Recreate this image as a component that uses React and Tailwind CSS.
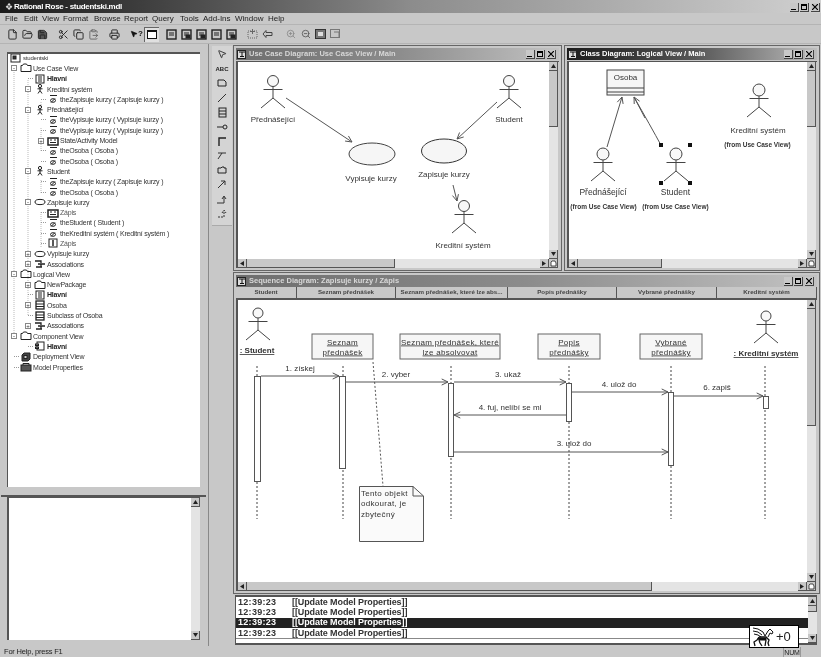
import {
  File, FolderOpen, Save, Scissors, Copy, ClipboardPaste, Printer, MousePointer2, ZoomIn, ZoomOut,
} from "lucide-react";

const menu = [
  ["File", "w-[19px]"], ["Edit", "w-[18px]"], ["View", "w-[21px]"], ["Format", "w-[31px]"], ["Browse", "w-[30px]"],
  ["Report", "w-[28px]"], ["Query", "w-[28px]"], ["Tools", "w-[23px]"], ["Add-Ins", "w-[32px]"], ["Window", "w-[33px]"], ["Help", "w-[20px]"],
];

const pads = ["-ml-[7px]", "pl-[3px]", "pl-[17px]", "pl-[30px]"];

const tree = [
  { l: 0, t: "studentski", i: "model", small: true },
  { l: 1, t: "Use Case View", i: "folder", e: "-" },
  { l: 2, t: "Hlavní", i: "diagram", b: true },
  { l: 2, t: "Kreditní systém", i: "actor", e: "-" },
  { l: 3, t: "theZapisuje kurzy ( Zapisuje kurzy )", i: "msg" },
  { l: 2, t: "Přednášející", i: "actor", e: "-" },
  { l: 3, t: "theVypisuje kurzy ( Vypisuje kurzy )", i: "msg" },
  { l: 3, t: "theVypisuje kurzy ( Vypisuje kurzy )", i: "msg" },
  { l: 3, t: "State/Activity Model", i: "state", e: "+" },
  { l: 3, t: "theOsoba ( Osoba )", i: "msg" },
  { l: 3, t: "theOsoba ( Osoba )", i: "msg" },
  { l: 2, t: "Student", i: "actor", e: "-" },
  { l: 3, t: "theZapisuje kurzy ( Zapisuje kurzy )", i: "msg" },
  { l: 3, t: "theOsoba ( Osoba )", i: "msg" },
  { l: 2, t: "Zapisuje kurzy", i: "usecase", e: "-" },
  { l: 3, t: "Zápis", i: "state", dim: true },
  { l: 3, t: "theStudent ( Student )", i: "msg" },
  { l: 3, t: "theKreditní systém ( Kreditní systém )", i: "msg" },
  { l: 3, t: "Zápis", i: "seq", dim: true },
  { l: 2, t: "Vypisuje kurzy", i: "usecase", e: "+" },
  { l: 2, t: "Associations", i: "assoc", e: "+" },
  { l: 1, t: "Logical View", i: "folder", e: "-" },
  { l: 2, t: "NewPackage", i: "folder", e: "+" },
  { l: 2, t: "Hlavní", i: "diagram", b: true },
  { l: 2, t: "Osoba", i: "class", e: "+" },
  { l: 2, t: "Subclass of Osoba", i: "class" },
  { l: 2, t: "Associations", i: "assoc", e: "+" },
  { l: 1, t: "Component View", i: "folder", e: "-" },
  { l: 2, t: "Hlavní", i: "comp", b: true },
  { l: 1, t: "Deployment View", i: "deploy" },
  { l: 1, t: "Model Properties", i: "props" },
];

const TreeIcon = ({ type }) => {
  const s = { fill: "none", stroke: "#222", strokeWidth: 1 };
  return (
    <svg width="12" height="10" viewBox="0 0 12 10" className="block">
      {type === "model" && <g {...s}><rect x="1" y="1" width="9" height="8" /><rect x="3" y="3" width="3" height="3" fill="#333" /></g>}
      {type === "folder" && <path {...s} d="M1 8.5V2.5h1.5l1-1.5h3l1 1.5H11v6z" />}
      {type === "diagram" && <g {...s}><rect x="2" y="1" width="8" height="8" /><path d="M4 3h4M4 5h4M4 7h4" /></g>}
      {type === "actor" && <g {...s}><circle cx="6" cy="2" r="1.6" /><path d="M6 3.6V6.5M3.5 4.8h5M6 6.5L4 9.5M6 6.5l2 3" /></g>}
      {type === "msg" && <g {...s}><path d="M3 1.5h7" /><path d="M8 4.5L4 8.5" /><ellipse cx="6" cy="6.5" rx="2.5" ry="1.8" /></g>}
      {type === "state" && <g {...s}><rect x="1" y="2" width="10" height="7" strokeWidth="1.5" /><path d="M3 4h2M7 4h2M3 6.5h6" /></g>}
      {type === "usecase" && <ellipse {...s} cx="6" cy="5" rx="5" ry="2.6" />}
      {type === "seq" && <g {...s}><rect x="2" y="1" width="8" height="8" /><path d="M6 2v6" strokeWidth="1.5" /></g>}
      {type === "assoc" && <path {...s} strokeWidth="1.3" d="M1 2h6v2M4 5h7M7 5v3M2 8h6" />}
      {type === "class" && <g {...s}><rect x="2" y="1" width="8" height="8" strokeWidth="1.3" /><path d="M2 4h8M2 6.5h8" /></g>}
      {type === "comp" && <g {...s}><rect x="3" y="1" width="7" height="8" /><rect x="1.5" y="3" width="3" height="1.5" /><rect x="1.5" y="6" width="3" height="1.5" /></g>}
      {type === "deploy" && <g {...s}><path d="M2 3l2-2h6v6l-2 2H2z" fill="#444" /><rect x="4" y="3.5" width="3" height="3" fill="#ccc" /></g>}
      {type === "props" && <g {...s}><rect x="1" y="3" width="10" height="6" fill="#555" /><path d="M3 3V1.5h6V3" /></g>}
    </svg>
  );
};

const TreeRow = ({ row }) => (
  <div className={`flex items-center h-[10.3px] ${pads[row.l]}`}>
    <span className="w-[8px] h-full flex items-center shrink-0">
      {row.e ? (
        <span className="w-[6px] h-[6px] border border-[#888] bg-white flex items-center justify-center text-[6px] leading-none text-[#333]">
          {row.e === "+" ? "+" : "-"}
        </span>
      ) : (
        row.l > 0 && <span className="w-full border-b border-dotted border-[#999] ml-[3px]" />
      )}
    </span>
    <span className="w-[14px] flex justify-center shrink-0"><TreeIcon type={row.i} /></span>
    <span
      className={`whitespace-nowrap leading-none tracking-[-0.2px] ${row.small ? "text-[6px]" : "text-[7px]"} ${row.b ? "font-bold text-[#222]" : "text-[#333]"} ${row.dim ? "text-[#555]" : ""}`}
    >
      {row.t}
    </span>
  </div>
);

const UpArrow = () => <svg width="5" height="4" viewBox="0 0 5 4"><path d="M2.5 0L5 4H0z" fill="#222" /></svg>;
const DownArrow = () => <svg width="5" height="4" viewBox="0 0 5 4"><path d="M0 0h5L2.5 4z" fill="#222" /></svg>;
const LeftArrow = () => <svg width="4" height="5" viewBox="0 0 4 5"><path d="M4 0v5L0 2.5z" fill="#222" /></svg>;
const RightArrow = () => <svg width="4" height="5" viewBox="0 0 4 5"><path d="M0 0v5l4-2.5z" fill="#222" /></svg>;

const Btn = ({ children, className = "" }) => (
  <span className={`flex items-center justify-center bg-[#c8c8c8] border-r border-b border-[#555] shrink-0 ${className}`}>{children}</span>
);

const VScroll = ({ thumb }) => (
  <div className="w-[9px] flex flex-col bg-[#e4e4e4] shrink-0">
    <Btn className="h-[9px]"><UpArrow /></Btn>
    {thumb && <div className={`bg-[#c8c8c8] border-b border-r border-[#555] shrink-0 ${thumb}`} />}
    <div className="flex-1" />
    <Btn className="h-[9px]"><DownArrow /></Btn>
  </div>
);

const HScroll = ({ thumb }) => (
  <div className="h-[9px] flex bg-[#e4e4e4] shrink-0">
    <Btn className="w-[9px]"><LeftArrow /></Btn>
    <div className={`bg-[#c8c8c8] border-b border-r border-[#555] shrink-0 ${thumb}`} />
    <div className="flex-1" />
    <Btn className="w-[9px]"><RightArrow /></Btn>
    <Btn className="w-[9px]">
      <svg width="8" height="8" viewBox="0 0 8 8"><path d="M2 7V3l1-1 3 0 1 2v3z" fill="#fff" stroke="#222" strokeWidth="0.8" /></svg>
    </Btn>
  </div>
);

const WinButtons = () => (
  <div className="flex gap-[1px] shrink-0">
    <span className="w-[9px] h-[9px] bg-[#c8c8c8] border-r border-b border-[#444] flex items-end pl-[1px] pb-[1px]"><span className="w-[5px] h-[1px] bg-black" /></span>
    <span className="w-[9px] h-[9px] bg-[#c8c8c8] border-r border-b border-[#444] flex items-center justify-center"><span className="w-[6px] h-[6px] border border-black border-t-2" /></span>
    <span className="w-[9px] h-[9px] ml-[1px] bg-[#c8c8c8] border-r border-b border-[#444] flex items-center justify-center">
      <svg width="6" height="6" viewBox="0 0 6 6"><path d="M0 0l6 6M6 0L0 6" stroke="#000" strokeWidth="1.2" /></svg>
    </span>
  </div>
);

const Window = ({ title, dark, className, tabs, thumb, vThumb, vb, cw, ch, children }) => (
  <div className={`flex flex-col bg-[#c8c8c8] border border-[#666] p-[2px] ${className}`}>
    <div
      className={`h-[12px] flex items-center pl-[1px] pr-[3px] shrink-0 bg-gradient-to-r ${dark ? "from-[#1c1c1c] via-[#555] to-[#bdbdbd] text-white" : "from-[#6e6e6e] via-[#8c8c8c] to-[#c2c2c2] text-[#d8d8d8]"}`}
    >
      <span className="w-[9px] h-[9px] bg-[#ddd] border border-[#222] mr-[3px] shrink-0 flex items-center justify-center">
        <svg width="6" height="6" viewBox="0 0 6 6" fill="none" stroke="#111"><path d="M0 1h6M3 1v5M1 5.5h4" /></svg>
      </span>
      <span className="flex-1 text-[7.5px] font-bold whitespace-nowrap leading-none">{title}</span>
      <WinButtons />
    </div>
    {tabs ? (
      <div className="flex h-[12px] shrink-0">
        {tabs.map(([t, w]) => (
          <span key={t} className={`flex items-center justify-center border-r border-b border-[#555] text-[6.2px] font-bold text-[#444] whitespace-nowrap leading-none ${w}`}>{t}</span>
        ))}
      </div>
    ) : (
      <div className="h-[1px] shrink-0" />
    )}
    <div className="flex-1 min-h-0 flex flex-col border-t-1 border-l-2 border-[#555] pr-[1px]">
      <div className="flex-1 min-h-0 flex">
        <div className="flex-1 min-w-0 bg-white overflow-hidden">
          <svg width={cw} height={ch} viewBox={vb} className="block">{children}</svg>
        </div>
        <VScroll thumb={vThumb} />
      </div>
      <HScroll thumb={thumb} />
    </div>
  </div>
);

const Actor = ({ x, y, r = 5.5 }) => (
  <g fill="none" stroke="#444" strokeWidth="1">
    <circle cx={x} cy={y} r={r} fill="#f8f8f8" />
    <path d={`M${x} ${y + r}V${y + 17}M${x - 9.5} ${y + 8.5}H${x + 9.5}M${x} ${y + 17}L${x - 12} ${y + 27}M${x} ${y + 17}L${x + 12} ${y + 27}`} />
  </g>
);

const T = ({ x, y, s = 8, b, u, a = "middle", c = "#333", ls, children }) => (
  <text x={x} y={y} fontSize={s} textAnchor={a} fill={c} fontWeight={b ? "bold" : "normal"} textDecoration={u ? "underline" : "none"} letterSpacing={ls}>
    {children}
  </text>
);

const Arrow = ({ x1, y1, x2, y2 }) => {
  const ang = Math.atan2(y2 - y1, x2 - x1);
  const p = (d) => `${x2 - 7 * Math.cos(ang + d)} ${y2 - 7 * Math.sin(ang + d)}`;
  return (
    <g fill="none" stroke="#555" strokeWidth="1">
      <path d={`M${x1} ${y1}L${x2} ${y2}`} />
      <path d={`M${p(0.45)}L${x2} ${y2}L${p(-0.45)}`} />
    </g>
  );
};

const Dash = ({ x, y1, y2 }) => <path d={`M${x} ${y1}V${y2}`} stroke="#444" strokeWidth="1" strokeDasharray="2 2" />;
const Act = ({ x, y, w, h }) => <rect x={x} y={y} width={w} height={h} fill="#fff" stroke="#555" strokeWidth="1" />;
const Obj = ({ x, w, l1, l2 }) => (
  <g>
    <rect x={x} y="335" width={w} height="25" fill="#f6f6f6" stroke="#666" strokeWidth="1" />
    <T x={x + w / 2} y="345.5" u ls="0.3">{l1}</T>
    <T x={x + w / 2} y="355.5" u ls="0.3">{l2}</T>
  </g>
);

const seqTabs = [
  ["Student", "w-[61px]"], ["Seznam přednášek", "w-[99px]"], ["Seznam přednášek, které lze abs...", "w-[112px]"],
  ["Popis přednášky", "w-[109px]"], ["Vybrané přednášky", "w-[100px]"], ["Kreditní systém", "w-[100px]"],
];

const Doc = ({ dark }) => (
  <svg width="11" height="11" viewBox="0 0 11 11" fill="none" stroke="#222">
    <rect x="1" y="1" width="9" height="9" strokeWidth="1.4" />
    <path d="M3 4h5M3 6h5" />
    {dark && <rect x="5" y="6" width="4" height="3" fill="#222" />}
  </svg>
);

const Slot = ({ children, pressed }) => (
  <span className={`w-[15px] h-[15px] flex items-center justify-center shrink-0 ${pressed ? "bg-[#e0e0e0] border-l border-t border-[#666]" : ""}`}>{children}</span>
);
const Sep = ({ w }) => <span className={`shrink-0 ${w}`} />;

const toolIcon = { size: 11, strokeWidth: 2, color: "#222" };

const tools = [
  <MousePointer2 size={10} color="#222" />,
  <span className="text-[6px] font-bold text-[#222] leading-none">ABC</span>,
  <svg width="10" height="8" viewBox="0 0 10 8" fill="none" stroke="#222"><path d="M1 1h6l2 2v4H1z" /></svg>,
  <svg width="10" height="10" viewBox="0 0 10 10" stroke="#333"><path d="M1 9L9 1" /></svg>,
  <svg width="9" height="11" viewBox="0 0 9 11" fill="none" stroke="#222"><rect x="1" y="1" width="7" height="9" /><path d="M1 4h7M1 7h7" /></svg>,
  <svg width="11" height="6" viewBox="0 0 11 6" fill="none" stroke="#222"><path d="M0 3h6" /><circle cx="8" cy="3" r="2" /></svg>,
  <svg width="9" height="9" viewBox="0 0 9 9" fill="none" stroke="#222" strokeWidth="1.4"><path d="M1 9V1h7" /></svg>,
  <svg width="10" height="8" viewBox="0 0 10 8" fill="none" stroke="#333"><path d="M1 7L5 1M1 1h8" /></svg>,
  <svg width="10" height="8" viewBox="0 0 10 8" fill="none" stroke="#222"><path d="M1 7V2h3l1-1h2v1h2v5z" /></svg>,
  <svg width="10" height="9" viewBox="0 0 10 9" fill="none" stroke="#333"><path d="M1 8L8 1M4 1h4v4" /></svg>,
  <svg width="10" height="9" viewBox="0 0 10 9" fill="none" stroke="#333"><path d="M0 8h7V2M5 4l2-3 2 3" /></svg>,
  <svg width="10" height="9" viewBox="0 0 10 9" fill="none" stroke="#333" strokeDasharray="2 1"><path d="M1 8h6V2M5 4l2-3 2 3" /></svg>,
];

export default function App() {
  return (
    <div className="relative w-[824px] h-[660px] bg-white overflow-hidden font-['Liberation_Sans',Arial,sans-serif] blur-[0.5px]">
      <div className="w-[821px] h-[657px] flex flex-col bg-[#c8c8c8]">
        {/* title bar */}
        <div className="h-[13px] pt-[1px] flex items-center bg-gradient-to-r from-[#1a1a1a] via-[#8c8c8c] to-[#d0d0d0] pl-[5px] pr-[1px] shrink-0">
          <span className="text-[#ddd] text-[9px] mr-[1px] leading-none">❖</span>
          <span className="flex-1 text-white text-[8px] tracking-[-0.3px] font-bold leading-none">Rational Rose - studentski.mdl</span>
          <WinButtons />
        </div>

        {/* menu */}
        <div className="h-[11px] flex items-center pl-[5px] shrink-0 text-[8px] text-[#222] leading-none">
          {menu.map(([m, w]) => <span key={m} className={w}>{m}</span>)}
        </div>

        {/* toolbar */}
        <div className="h-[20px] flex items-center pl-[5px] border-t border-b border-[#b4b4b4] shrink-0">
          <Slot><File {...toolIcon} /></Slot>
          <Slot><FolderOpen {...toolIcon} /></Slot>
          <Slot><Save {...toolIcon} fill="#555" /></Slot>
          <Sep w="w-[6px]" />
          <Slot><Scissors {...toolIcon} /></Slot>
          <Slot><Copy {...toolIcon} /></Slot>
          <Slot><ClipboardPaste {...toolIcon} color="#666" /></Slot>
          <Sep w="w-[6px]" />
          <Slot><Printer {...toolIcon} /></Slot>
          <Sep w="w-[7px]" />
          <Slot><span className="flex items-center text-[8px] font-bold text-[#111] leading-none"><MousePointer2 size={8} color="#111" fill="#111" />?</span></Slot>
          <Slot pressed><span className="w-[10px] h-[9px] border border-[#111] border-t-2 bg-white" /></Slot>
          <Sep w="w-[5px]" />
          <Slot><Doc /></Slot>
          <Slot><Doc dark /></Slot>
          <Slot><Doc dark /></Slot>
          <Slot><Doc /></Slot>
          <Slot><Doc dark /></Slot>
          <Sep w="w-[6px]" />
          <Slot>
            <svg width="11" height="10" viewBox="0 0 11 10" fill="none" stroke="#666"><rect x="1" y="2" width="9" height="7" strokeDasharray="1 1" /><path d="M5.5 0v5M3 2.5h5" /></svg>
          </Slot>
          <Slot>
            <svg width="11" height="8" viewBox="0 0 11 8" fill="none" stroke="#444"><path d="M10 2.5H4V0.5L1 4l3 3.5v-2h6z" /></svg>
          </Slot>
          <Sep w="w-[8px]" />
          <Slot><ZoomIn size={10} color="#888" /></Slot>
          <Slot><ZoomOut size={10} color="#555" /></Slot>
          <Slot>
            <svg width="11" height="10" viewBox="0 0 11 10"><rect x="0.5" y="0.5" width="10" height="9" fill="#777" stroke="#333" /><rect x="3" y="3" width="5" height="4" fill="#ddd" /></svg>
          </Slot>
          <Slot>
            <svg width="11" height="10" viewBox="0 0 11 10" fill="none" stroke="#777"><rect x="0.5" y="0.5" width="9" height="8" /><path d="M4 3h5v5" /></svg>
          </Slot>
        </div>

        {/* body */}
        <div className="h-[602px] flex shrink-0">
          {/* browser + documentation */}
          <div className="w-[209px] flex flex-col border-r border-[#888] pl-[7px] pr-[8px] pt-[8px] shrink-0">
            <div className="h-[435px] relative bg-white border-t-2 border-l border-[#555] overflow-hidden shrink-0">
              <svg width="60" height="330" className="absolute left-0 top-0" fill="none" stroke="#bbb" strokeDasharray="1 1">
                <path d="M6 16V286M20 26V262M33 48V54M33 74V98M33 126V140M33 158V194" />
              </svg>
              <div className="relative -mt-[1px]">
                {tree.map((row, i) => <TreeRow key={i} row={row} />)}
              </div>
            </div>
            <div className="h-[10px] border-b-2 border-[#555] -mx-[6px] shrink-0" />
            <div className="h-[143px] flex bg-white border-t border-l-2 border-[#555] shrink-0">
              <div className="flex-1" />
              <VScroll />
            </div>
          </div>

          {/* diagram toolbox */}
          <div className="w-[24px] pl-[3px] pr-[1px] pt-[2px] shrink-0">
            <div className="h-[180px] bg-[#d4d4d4] border-b border-[#aaa] flex flex-col items-center pt-[1px]">
              {tools.map((t, i) => (
                <span key={i} className="h-[14.5px] flex items-center justify-center">{t}</span>
              ))}
            </div>
          </div>

          {/* mdi area */}
          <div className="flex-1 flex flex-col pt-[1px] min-w-0">
            <div className="h-[226px] flex gap-[2px] shrink-0">
              <Window title="Use Case Diagram: Use Case View / Main" className="w-[329px]" thumb="w-[148px]" vThumb="h-[56px]" vb="238 62 311 197" cw={311} ch={197}>
                <Actor x={273} y={81} />
                <T x={273} y={122}>Přednášející</T>
                <Arrow x1={286} y1={98} x2={352} y2={142} />
                <Actor x={509} y={81} />
                <T x={509} y={122}>Student</T>
                <Arrow x1={497} y1={102} x2={457} y2={139} />
                <ellipse cx="372" cy="154" rx="23" ry="11" fill="#f6f6f6" stroke="#444" />
                <T x={371} y={181}>Vypisuje kurzy</T>
                <ellipse cx="444" cy="151" rx="22.5" ry="12" fill="#f6f6f6" stroke="#333" />
                <T x={444} y={177}>Zapisuje kurzy</T>
                <Arrow x1={453} y1={185} x2={457} y2={201} />
                <Actor x={464} y={206} />
                <T x={463} y={248}>Kreditní systém</T>
              </Window>
              <Window title="Class Diagram: Logical View / Main" dark className="w-[256px]" thumb="w-[84px]" vThumb="h-[56px]" vb="569 62 238 197" cw={238} ch={197}>
                <rect x="607" y="70" width="37" height="25" fill="#f6f6f6" stroke="#444" />
                <path d="M607 88H644M607 92H644" stroke="#444" />
                <T x={625.5} y={80}>Osoba</T>
                <Arrow x1={607} y1={147} x2={622} y2={97} />
                <path d="M662 147Q650 125 634 97" fill="none" stroke="#555" />
                <Arrow x1={645} y1={118} x2={634} y2={97} />
                <Actor x={603} y={154} r={6} />
                <T x={603} y={195} s={8.5}>Přednášející</T>
                <T x={603.5} y={209} s={6.5} b>(from Use Case View)</T>
                <Actor x={676} y={154} r={6} />
                <T x={675.5} y={195} s={8.5}>Student</T>
                <T x={675.5} y={209} s={6.5} b>(from Use Case View)</T>
                {[[659, 143], [688, 143], [659, 181], [688, 181]].map(([x, y]) => (
                  <rect key={`${x}-${y}`} x={x} y={y} width="4" height="4" fill="#111" />
                ))}
                <Actor x={759} y={90} r={6} />
                <T x={758} y={133} s={8}>Kreditní systém</T>
                <T x={757.5} y={147} s={6.5} b>(from Use Case View)</T>
              </Window>
            </div>

            <Window title="Sequence Diagram: Zapisuje kurzy / Zápis" className="w-[587px] h-[322px] mt-[1px] shrink-0" tabs={seqTabs} thumb="w-[405px]" vThumb="h-[117px]" vb="238 301 569 281" cw={569} ch={281}>
              <Actor x={258} y={314} r={5} />
              <T x={257} y={354} u b>: Student</T>
              <Obj x={312} w={61} l1="Seznam" l2="přednášek" />
              <Obj x={400} w={100} l1="Seznam přednášek, které" l2="lze absolvovat" />
              <Obj x={538} w={62} l1="Popis" l2="přednášky" />
              <Obj x={640} w={62} l1="Vybrané" l2="přednášky" />
              <Actor x={766} y={317} r={5} />
              <T x={766} y={357} u b>: Kreditní systém</T>

              <Dash x={257} y1={367} y2={520} />
              <Dash x={343} y1={367} y2={520} />
              <Dash x={451} y1={367} y2={520} />
              <Dash x={569} y1={367} y2={520} />
              <Dash x={671} y1={367} y2={520} />
              <Dash x={765} y1={367} y2={520} />
              <path d="M373 363L383 487" stroke="#555" strokeDasharray="2 2" fill="none" />

              <Act x={254.5} y={377.5} w={6} h={105} />
              <Act x={339.5} y={377.5} w={6} h={92} />
              <Act x={448.5} y={384.5} w={5} h={73} />
              <Act x={566.5} y={384.5} w={5} h={38} />
              <Act x={668.5} y={393.5} w={5} h={73} />
              <Act x={763.5} y={397.5} w={5} h={12} />

              <Arrow x1={261} y1={377} x2={339} y2={377} />
              <T x={300} y={372}>1. získej</T>
              <Arrow x1={346} y1={383} x2={448} y2={383} />
              <T x={396} y={378}>2. vyber</T>
              <Arrow x1={454} y1={383} x2={566} y2={383} />
              <T x={508} y={378}>3. ukaž</T>
              <Arrow x1={572} y1={393} x2={668} y2={393} />
              <T x={619} y={388}>4. ulož do</T>
              <Arrow x1={566} y1={416} x2={454} y2={416} />
              <T x={510} y={411}>4. fuj, nelíbí se mi</T>
              <Arrow x1={454} y1={453} x2={668} y2={453} />
              <T x={574} y={447}>3. ulož do</T>
              <Arrow x1={674} y1={397} x2={763} y2={397} />
              <T x={717} y={391}>6. zapiš</T>

              <path d="M359.5 487.5H413L423.5 497V542.5H359.5Z" fill="#fafafa" stroke="#555" />
              <path d="M413 487.5V497H423.5" fill="none" stroke="#555" />
              <T x={361} y={496.5} a="start" ls="0.3">Tento objekt</T>
              <T x={361} y={507} a="start" ls="0.3">odkourat, je</T>
              <T x={361} y={517.5} a="start" ls="0.3">zbytečný</T>
            </Window>

            {/* log */}
            <div className="h-[50px] mt-[1px] ml-[2px] mr-[4px] flex bg-white border-t-2 border-l border-b-2 border-[#555] shrink-0">
              <div className="flex-1 min-w-0">
                <div className="border-b border-[#888]">
                  {[false, false, true, false].map((sel, i) => (
                    <div key={i} className={`h-[10.3px] flex items-center text-[9px] font-bold leading-none ${sel ? "bg-[#222] text-white" : "text-[#333]"}`}>
                      <span className="w-[56px] pl-[2px] tracking-[0.3px]">12:39:23</span>
                      <span className="tracking-[-0.1px]">[[Update Model Properties]]</span>
                    </div>
                  ))}
                </div>
              </div>
              <VScroll thumb="h-[6px]" />
            </div>
          </div>
        </div>

        {/* status bar */}
        <div className="h-[11px] flex items-center pl-[4px] pt-[1px] shrink-0 text-[7.5px] tracking-[-0.2px] text-[#222] leading-none">
          <span className="flex-1">For Help, press F1</span>
          <span className="w-[18px] h-[10px] border-l border-r border-[#999] text-[7px] flex items-center justify-center mr-[20px]">NUM</span>
        </div>
      </div>

      {/* pegasus cursor badge */}
      <div className="absolute left-[749px] top-[625px] w-[50px] h-[23px] bg-white border border-black flex items-center pl-[2px] gap-[2px]">
        <svg width="22" height="20" viewBox="0 0 22 20" fill="none" stroke="#111" strokeWidth="1">
          <path d="M1 1l5 1 5 3 2 4M1 4l5 1 4 3M2 7l4 1 3 2" />
          <path d="M13 9l3-5 2-2 3 3-1 2-2-1-2 4" />
          <path d="M7 10h7l3 3-1 3 1 3M14 13l-1 6M7 10L5 13l-3 2 1 4M7 13l1 3 2 3" strokeWidth="1.3" />
          <path d="M6 11h8v2H7z" fill="#111" />
        </svg>
        <span className="text-[13px] text-[#222] leading-none">+0</span>
      </div>
    </div>
  );
}
